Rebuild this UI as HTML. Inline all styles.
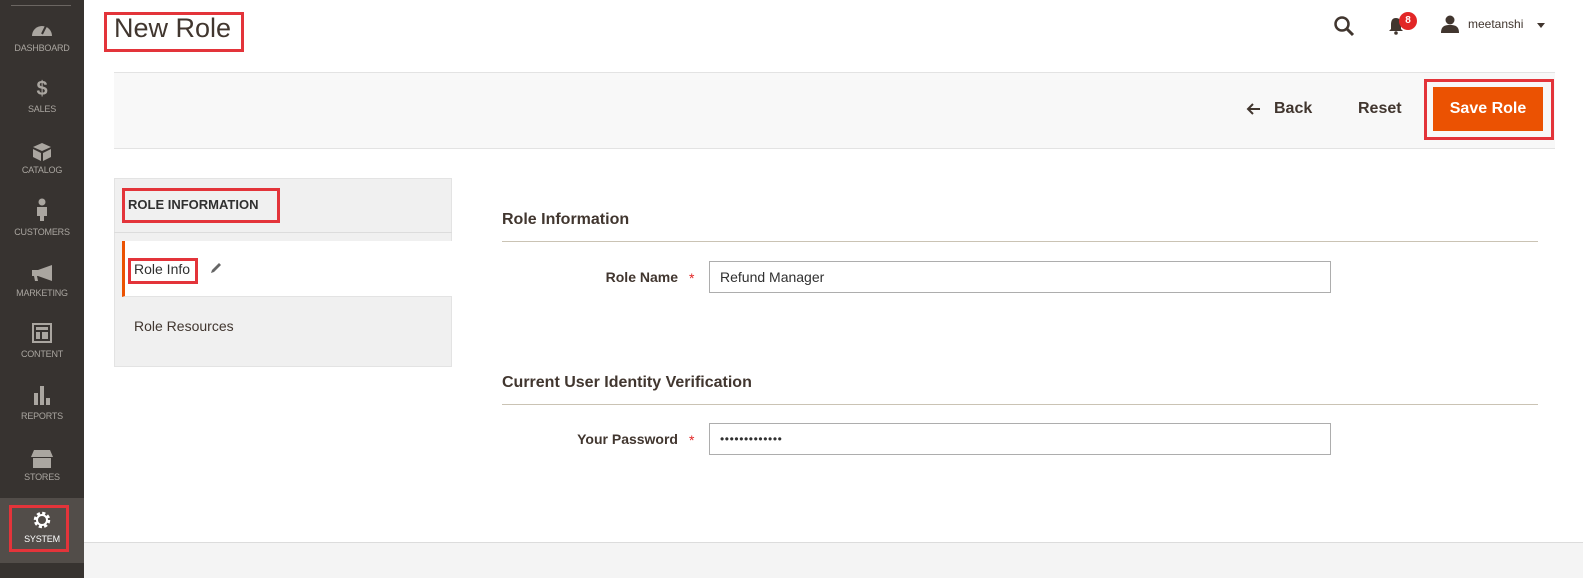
<!DOCTYPE html>
<html><head><meta charset="utf-8"><style>
*{margin:0;padding:0;box-sizing:border-box}
body{width:1585px;height:578px;overflow:hidden;background:#fff;font-family:"Liberation Sans",sans-serif;color:#41362f;position:relative}
.abs{position:absolute}
#side{left:0;top:0;width:84px;height:578px;background:#373330}
.nav{position:absolute;left:0;width:84px;text-align:center;font-size:9px;color:#aaa6a0;letter-spacing:-0.2px}
.ico{position:absolute;left:0;width:84px;display:flex;justify-content:center}
.txt{font-weight:bold}
.box{position:absolute;border:3px solid #e3343a}
</style></head><body>
<div id="side" class="abs">
 <div class="abs" style="left:11px;top:5px;width:60px;height:1px;background:#6b6662"></div>
 <div class="abs" style="left:0;top:498px;width:84px;height:65px;background:#524d49"></div>
 <div class="ico" style="top:21px"><svg width="24" height="16" viewBox="0 0 24 16"><path d="M2 15 A10 10 0 0 1 22 15 Z" fill="#aaa6a0"/><path d="M12 13 L16 5" stroke="#373330" stroke-width="2"/></svg></div>
 <div class="nav" style="top:43px">DASHBOARD</div>
 <div class="ico" style="top:78px;font-size:20px;font-weight:bold;color:#aaa6a0;line-height:22px">$</div>
 <div class="nav" style="top:104px">SALES</div>
 <div class="ico" style="top:142px"><svg width="20" height="20" viewBox="0 0 20 20"><path d="M10 1 L19 5 L10 9 L1 5Z M1 7 L9 11 L9 19 L1 15Z M19 7 L11 11 L11 19 L19 15Z" fill="#aaa6a0"/></svg></div>
 <div class="nav" style="top:165px">CATALOG</div>
 <div class="ico" style="top:198px"><svg width="14" height="24" viewBox="0 0 14 24"><circle cx="7" cy="4" r="3.5" fill="#aaa6a0"/><path d="M2 9 H12 V18 H9 V23 H5 V18 H2Z" fill="#aaa6a0"/></svg></div>
 <div class="nav" style="top:227px">CUSTOMERS</div>
 <div class="ico" style="top:264px"><svg width="24" height="18" viewBox="0 0 24 18"><path d="M2 6 H8 L22 1 V17 L8 12 H7 L8 17 H5 L4 12 H2Z" fill="#aaa6a0"/></svg></div>
 <div class="nav" style="top:288px">MARKETING</div>
 <div class="ico" style="top:323px"><svg width="20" height="20" viewBox="0 0 20 20"><rect x="1" y="1" width="18" height="18" fill="none" stroke="#aaa6a0" stroke-width="2"/><rect x="4" y="4" width="12" height="3" fill="#aaa6a0"/><rect x="4" y="9" width="4" height="7" fill="#aaa6a0"/><rect x="10" y="9" width="6" height="7" fill="#aaa6a0"/></svg></div>
 <div class="nav" style="top:349px">CONTENT</div>
 <div class="ico" style="top:385px"><svg width="20" height="20" viewBox="0 0 20 20"><rect x="2" y="8" width="4" height="12" fill="#aaa6a0"/><rect x="8" y="1" width="4" height="19" fill="#aaa6a0"/><rect x="14" y="13" width="4" height="7" fill="#aaa6a0"/></svg></div>
 <div class="nav" style="top:411px">REPORTS</div>
 <div class="ico" style="top:449px"><svg width="24" height="20" viewBox="0 0 24 20"><path d="M4 1 H20 L23 8 H1Z" fill="#aaa6a0"/><path d="M3 9 H21 V19 H3Z" fill="#aaa6a0"/></svg></div>
 <div class="nav" style="top:472px">STORES</div>
 <div class="ico" style="top:510px"><svg width="20" height="20" viewBox="0 0 20 20"><circle cx="10" cy="10" r="6.5" fill="none" stroke="#fff" stroke-width="3.5" stroke-dasharray="3 2.1"/><circle cx="10" cy="10" r="5" fill="none" stroke="#fff" stroke-width="2"/></svg></div>
 <div class="nav" style="top:534px;color:#fff">SYSTEM</div>
 <div class="box" style="left:9px;top:505px;width:60px;height:47px"></div>
</div>

<div class="abs" style="left:114px;top:13px;font-size:27px;color:#41362f">New Role</div>
<div class="box" style="left:104px;top:12px;width:140px;height:40px"></div>

<svg class="abs" style="left:1333px;top:15px" width="22" height="22" viewBox="0 0 22 22"><circle cx="9" cy="9" r="6.5" fill="none" stroke="#41362f" stroke-width="2.5"/><path d="M14 14 L20 20" stroke="#41362f" stroke-width="3"/></svg>
<svg class="abs" style="left:1387px;top:17px" width="18" height="18" viewBox="0 0 18 18"><path d="M9 1 C5 1 4 4 4 8 V12 L2 14 H16 L14 12 V8 C14 4 13 1 9 1Z" fill="#41362f"/><circle cx="9" cy="16" r="1.8" fill="#41362f"/></svg>
<div class="abs" style="left:1399px;top:12px;width:18px;height:18px;border-radius:9px;background:#e22626;color:#fff;font-size:10px;font-weight:bold;text-align:center;line-height:18px">8</div>
<svg class="abs" style="left:1440px;top:15px" width="20" height="18" viewBox="0 0 20 18"><circle cx="10" cy="5" r="4.5" fill="#41362f"/><path d="M1 18 C1 11 5 10 10 10 C15 10 19 11 19 18Z" fill="#41362f"/></svg>
<div class="abs" style="left:1468px;top:17px;font-size:12px;color:#41362f">meetanshi</div>
<div class="abs" style="left:1537px;top:23px;border-left:4px solid transparent;border-right:4px solid transparent;border-top:5px solid #41362f"></div>

<div class="abs" style="left:114px;top:72px;width:1441px;height:77px;background:#f8f8f8;border-top:1px solid #e3e3e3;border-bottom:1px solid #e3e3e3"></div>
<svg class="abs" style="left:1245px;top:102px" width="16" height="14" viewBox="0 0 16 14"><path d="M15 7 H3 M8 2 L3 7 L8 12" fill="none" stroke="#41362f" stroke-width="2"/></svg>
<div class="abs txt" style="left:1274px;top:100px;font-size:16px">Back</div>
<div class="abs txt" style="left:1358px;top:100px;font-size:16px">Reset</div>
<div class="abs" style="left:1433px;top:87px;width:110px;height:44px;background:#eb5202;color:#fff;font-size:16px;font-weight:bold;text-align:center;line-height:44px">Save Role</div>
<div class="box" style="left:1424px;top:79px;width:130px;height:61px"></div>

<div class="abs" style="left:114px;top:178px;width:338px;height:189px;background:#f0f0f0;border:1px solid #e3e3e3"></div>
<div class="abs" style="left:114px;top:232px;width:338px;height:1px;background:#dcdcdc"></div>
<div class="abs" style="left:128px;top:197px;font-size:13px;font-weight:bold;color:#303030">ROLE INFORMATION</div>
<div class="box" style="left:122px;top:188px;width:158px;height:35px"></div>
<div class="abs" style="left:122px;top:241px;width:330px;height:56px;background:#fff;border-left:3px solid #eb5202;border-bottom:1px solid #e3e3e3"></div>
<div class="abs" style="left:134px;top:261px;font-size:14px;color:#303030">Role Info</div>
<div class="box" style="left:128px;top:258px;width:70px;height:26px"></div>
<svg class="abs" style="left:209px;top:261px" width="14" height="14" viewBox="0 0 14 14"><path d="M2 12 L3 9 L10 2 L12 4 L5 11Z" fill="#666"/></svg>
<div class="abs" style="left:134px;top:318px;font-size:14px;color:#41362f">Role Resources</div>

<div class="abs txt" style="left:502px;top:211px;font-size:16px">Role Information</div>
<div class="abs" style="left:502px;top:241px;width:1036px;height:1px;background:#cac3b4"></div>
<div class="abs txt" style="left:560px;top:269px;width:118px;text-align:right;font-size:14px">Role Name</div>
<div class="abs" style="left:689px;top:270px;color:#e22626;font-size:14px">*</div>
<div class="abs" style="left:709px;top:261px;width:622px;height:32px;border:1px solid #adadad;font-size:14px;padding:7px 10px;color:#303030">Refund Manager</div>

<div class="abs txt" style="left:502px;top:374px;font-size:16px">Current User Identity Verification</div>
<div class="abs" style="left:502px;top:404px;width:1036px;height:1px;background:#cac3b4"></div>
<div class="abs txt" style="left:540px;top:431px;width:138px;text-align:right;font-size:14px">Your Password</div>
<div class="abs" style="left:689px;top:432px;color:#e22626;font-size:14px">*</div>
<div class="abs" style="left:709px;top:423px;width:622px;height:32px;border:1px solid #adadad;font-size:12px;padding:8px 10px;color:#303030;letter-spacing:0.6px">•••••••••••••</div>

<div class="abs" style="left:84px;top:542px;width:1499px;height:36px;background:#f4f4f4;border-top:1px solid #dcdcdc"></div>
</body></html>
